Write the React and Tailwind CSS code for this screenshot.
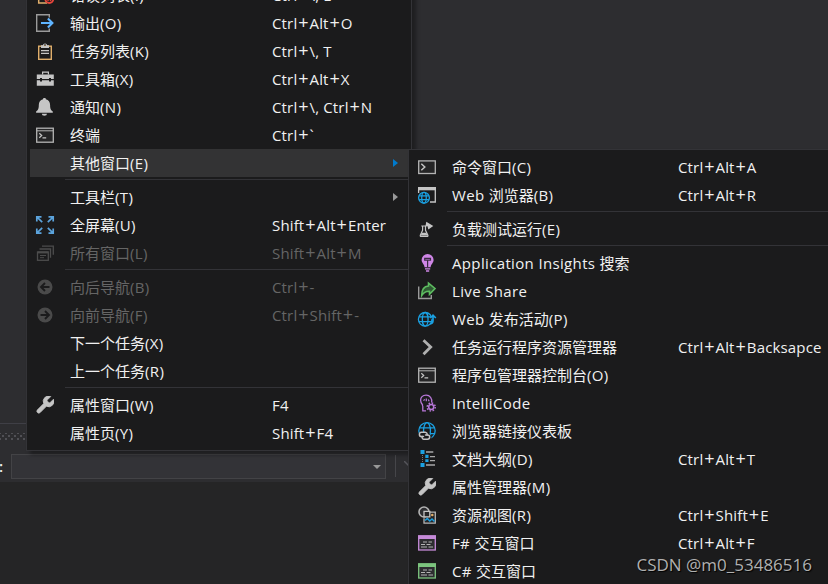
import clsx from "clsx";

const GRAY = "#c5c5c5";
const BLUE = "#1ba1e2";

function Svg({ children, className }) {
  return (
    <svg
      width="18"
      height="18"
      viewBox="0 0 18 18"
      fill="none"
      className={clsx("shrink-0 overflow-visible", className)}
    >
      {children}
    </svg>
  );
}

function ErrorListIcon() {
  return (
    <Svg>
      <path d="M11 17H2.7V1H15v7" stroke="#e0ae6b" strokeWidth="1.5" />
      <circle cx="13.3" cy="13" r="4" stroke="#e8463c" strokeWidth="1.8" />
      <path d="M11.5 11.2l3.6 3.6M15.1 11.2l-3.6 3.6" stroke="#e8463c" strokeWidth="1.3" />
    </Svg>
  );
}

function OutputIcon() {
  return (
    <Svg>
      <path d="M13.3 3.5V.7H.7v16.6h12.6v-2.8" stroke="#9a9a9a" strokeWidth="1.4" />
      <path d="M5 9h11.5M11.9 4.5L16.4 9l-4.5 4.5" stroke="#5fb4ff" strokeWidth="2.1" />
    </Svg>
  );
}

function TaskListIcon() {
  return (
    <Svg>
      <rect x="2.7" y="4.2" width="12.6" height="13.1" stroke="#e0ae6b" strokeWidth="1.4" />
      <path
        fillRule="evenodd"
        d="M5 6V3.3h1.8a2.3 2.3 0 0 1 4.5 0H13V6zM9 2.2a1 1 0 1 0 0 2 1 1 0 0 0 0-2z"
        fill={GRAY}
      />
      <path d="M5 8.6h8M5 11.4h8" stroke={GRAY} strokeWidth="1.2" />
    </Svg>
  );
}

function ToolboxIcon() {
  return (
    <Svg>
      <path d="M6.6 4.5V2.2h5.8v2.3" stroke={GRAY} strokeWidth="1.2" />
      <path d="M.8 4.5h17V9H15V8h-2v1H6V8H4v1H.8z" fill={GRAY} />
      <path d="M.8 10.2H4v1.2h2v-1.2h7v1.2h2v-1.2h2.8v5.5H.8z" fill={GRAY} />
    </Svg>
  );
}

function BellIcon() {
  return (
    <Svg>
      <path
        d="M8.4 0c1 0 1.5.5 1.5 1.2 2.7.7 4.2 3 4.2 5.8 0 4 .9 5.4 2.7 6.4v1.3H.1v-1.3C1.9 12.4 2.8 11 2.8 7c0-2.8 1.5-5.1 4.2-5.8C7 .5 7.4 0 8.4 0z"
        fill={GRAY}
      />
      <path d="M5.8 15.7H11a2.6 2.1 0 0 1-5.2 0z" fill={GRAY} />
    </Svg>
  );
}

function TerminalIcon() {
  return (
    <Svg>
      <rect x=".7" y="2.2" width="16.6" height="14" fill="#252526" stroke="#b4b4b4" strokeWidth="1.3" />
      <path d="M1 4.8h16" stroke="#b4b4b4" />
      <path d="M3.3 7.3l2.4 2.2-2.4 2.2M6.5 11.9h3.7" stroke={GRAY} strokeWidth="1.2" />
    </Svg>
  );
}

function FullScreenIcon() {
  const corner = "M.8 5.5V.8h4.7M.8.8l5.4 5.4";
  return (
    <Svg>
      <g stroke="#5ba3dc" strokeWidth="1.7">
        <path d={corner} />
        <path d={corner} transform="rotate(90 9 9)" />
        <path d={corner} transform="rotate(180 9 9)" />
        <path d={corner} transform="rotate(270 9 9)" />
      </g>
    </Svg>
  );
}

function AllWindowsIcon() {
  return (
    <Svg>
      <g stroke="#4c4c4c" strokeWidth="1.3">
        <path d="M6 2.2h11.3v8.6" />
        <path d="M3.5 5h11v8.8" />
        <rect x="1.5" y="8" width="10.8" height="8.3" />
        <path d="M1.5 8.4h10.8" strokeWidth="2" />
        <path d="M4 11.5h6M4 13.7h4" strokeWidth="1" />
      </g>
    </Svg>
  );
}

function NavIcon({ forward }) {
  return (
    <Svg className={forward && "-scale-x-100"}>
      <circle cx="9" cy="9" r="7.5" fill="#4a4a4a" />
      <path d="M13.5 9H5.3M9 5L5 9l4 4" stroke="#1b1b1c" strokeWidth="1.9" />
    </Svg>
  );
}

function WrenchIcon() {
  return (
    <svg width="18" height="18" viewBox="2 2 20 20" className="shrink-0">
      <path
        d="M14.7 6.3a1 1 0 0 0 0 1.4l1.6 1.6a1 1 0 0 0 1.4 0l3.77-3.77a6 6 0 0 1-7.94 7.94l-6.91 6.91a2.12 2.12 0 0 1-3-3l6.91-6.91a6 6 0 0 1 7.94-7.94l-3.76 3.76z"
        fill={GRAY}
        stroke={GRAY}
        strokeWidth=".8"
      />
    </svg>
  );
}

function CommandIcon() {
  return (
    <Svg>
      <rect x=".7" y="2.9" width="16.6" height="12.6" fill="#252526" stroke="#b4b4b4" strokeWidth="1.3" />
      <path d="M3.3 5.8L6.8 9l-3.5 3.2" stroke={GRAY} strokeWidth="1.5" />
    </Svg>
  );
}

function Globe({ cx, cy, r }) {
  return (
    <g transform={`translate(${cx} ${cy})`} stroke={BLUE} strokeWidth="1.3">
      <circle r={r} fill="#1b1b1c" />
      <ellipse rx={r * 0.42} ry={r} />
      <path d={`M${-r * 0.9} ${-r * 0.35}H${r * 0.9}M${-r * 0.9} ${r * 0.35}H${r * 0.9}`} />
    </g>
  );
}

function WebBrowserIcon() {
  return (
    <Svg>
      <path d="M0 1h18v3.3H0z" fill={GRAY} />
      <path d="M.6 4v3M17.3 4v12H12" stroke={GRAY} strokeWidth="1.3" />
      <Globe cx={6} cy={11.8} r={5.4} />
    </Svg>
  );
}

function LoadTestIcon() {
  return (
    <Svg>
      <path d="M8.3 1.7L15.3 6l-5 3.5-.8-3.3-2-.2z" fill={GRAY} />
      <path
        d="M3.3 6h5.4M4.6 6v4.3l-2.3 5q-.3 1.1.8 1.1h6q1.1 0 .8-1.1l-2.4-5V6"
        stroke={GRAY}
        strokeWidth="1.2"
      />
      <path d="M3.7 12.7h4.8l1 2.9H2.7z" fill={GRAY} />
    </Svg>
  );
}

function LightbulbIcon() {
  return (
    <Svg>
      <path
        d="M9.6 0a6 6 0 0 1 6 6c0 3-2.9 4.3-2.9 7.2H6.5C6.5 10.3 3.6 9 3.6 6a6 6 0 0 1 6-6z"
        fill="#cf86e6"
      />
      <path d="M6.7 4.4h5.8v1.8H6.7zM9.6 6v7.2" stroke="#3a2a42" strokeWidth="1.2" />
      <path d="M7 14.9h5.2M8 17h3.2" stroke="#cf86e6" strokeWidth="1.3" />
    </Svg>
  );
}

function LiveShareIcon() {
  return (
    <Svg>
      <path d="M.7 4.5v12h12.6V13" stroke="#9a9a9a" strokeWidth="1.4" />
      <path
        d="M10.5 1.2L17 6.5l-5.5 5.7V9.3C8 9 5.7 10.3 3.7 13.5 3.7 8 6 4.3 10.5 4z"
        fill="#2f5a33"
        stroke="#5dbb60"
        strokeWidth="1.6"
      />
    </Svg>
  );
}

function WebPublishIcon() {
  return (
    <Svg>
      <Globe cx={7.2} cy={9.3} r={6.8} />
      <path d="M15 9V5" stroke="#1b1b1c" strokeWidth="3.5" />
      <path d="M12 14q3-.5 3-3.500V5.300M12.200 8L15 5.200 17.800 8" stroke={BLUE} strokeWidth="1.7" />
    </Svg>
  );
}

function ChevronIcon() {
  return (
    <Svg>
      <path d="M5.5 2.2L12.7 9l-7.2 7.2" stroke="#b0b0b0" strokeWidth="2.8" />
    </Svg>
  );
}

function IntelliCodeIcon() {
  return (
    <Svg>
      <g stroke="#b877d8" strokeWidth="1.3">
        <path d="M13.7 8.5c.6-4-1.7-7.4-5.6-7.4-3.6 0-5.5 2.4-5.5 5.2 0 1.7.4 2.7 1.9 4.4V12M4.8 12v4.8H8" />
        <path d="M5.5 6.7l1.3-1.4M8.3 7.2V4.5M10.2 5.5l1 1.7" strokeWidth="1.2" />
        <circle cx="13.2" cy="13" r="2.5" strokeWidth="1.5" />
        <circle cx="13.2" cy="13" r="4" strokeWidth="1.5" strokeDasharray="1.57 1.57" />
      </g>
    </Svg>
  );
}

function BrowserLinkIcon() {
  return (
    <Svg>
      <Globe cx={9} cy={8.8} r={8.2} />
      <g strokeLinecap="round">
        <path d="M2.5 12.7h7M4 15.5h7" stroke="#1b1b1c" strokeWidth="5" />
        <g stroke={GRAY} strokeWidth="1.5">
          <path d="M5.5 14.6H3.6a2.2 2.2 0 0 1 0-4.4h3.6a2.2 2.2 0 0 1 1.9 2.8" />
          <path d="M7.5 12.9h2a2.2 2.2 0 0 1 0 4.4H6a2.2 2.2 0 0 1-1.9-2.8" />
        </g>
      </g>
    </Svg>
  );
}

function OutlineIcon() {
  return (
    <Svg>
      <path d="M2.5 0h4v4h-4zM7.3 4.8h3.2V8H7.3zM7.3 9.2h3.2V12H7.3zM2.5 13h4v4h-4z" fill={BLUE} />
      <path d="M8 2h7.3M12 6.6h5M12 10.7h5M8 15h9" stroke="#a8a8a8" strokeWidth="1.3" />
      <path d="M4.5 5v7" stroke="#7a7a7a" strokeDasharray="1 1" />
    </Svg>
  );
}

function ResourceViewIcon() {
  return (
    <Svg>
      <path d="M12 6.2h5.3v11H6v-5" fill="#252526" stroke="#b4b4b4" strokeWidth="1.3" />
      <path d="M7 14.5l2.3-2 2.5 2.5 2.2-2 2.5 2.5" stroke={BLUE} strokeWidth="1.5" />
      <circle cx="14.3" cy="9" r="1.3" fill="#e0ae6b" />
      <circle cx="6" cy="6" r="5" fill="#2d2d30" stroke="#b4b4b4" strokeWidth="1.6" />
      <path d="M6 5.3h5.8v5.5H6z" fill="#252526" stroke={GRAY} strokeWidth="1.3" />
    </Svg>
  );
}

function InteractiveIcon({ color }) {
  return (
    <Svg>
      <rect x=".7" y="2" width="16.6" height="14" fill="#2d2d30" stroke={color} strokeWidth="1.3" />
      <path d="M0 1.3h18V5H0z" fill={color} />
      <path d="M5 8h4M10.5 8H14M3 10.5h4M8.5 10.5h4M3 13h6M10.5 13H15" stroke="#b4b4b4" strokeWidth="1.2" />
    </Svg>
  );
}

const mainMenu = [
  { icon: <ErrorListIcon />, label: "错误列表(I)", keys: "Ctrl+\\, E" },
  { icon: <OutputIcon />, label: "输出(O)", keys: "Ctrl+Alt+O" },
  { icon: <TaskListIcon />, label: "任务列表(K)", keys: "Ctrl+\\, T" },
  { icon: <ToolboxIcon />, label: "工具箱(X)", keys: "Ctrl+Alt+X" },
  { icon: <BellIcon />, label: "通知(N)", keys: "Ctrl+\\, Ctrl+N" },
  { icon: <TerminalIcon />, label: "终端", keys: "Ctrl+`" },
  { label: "其他窗口(E)", submenu: true, active: true },
  { separator: true },
  { label: "工具栏(T)", submenu: true },
  { icon: <FullScreenIcon />, label: "全屏幕(U)", keys: "Shift+Alt+Enter" },
  { icon: <AllWindowsIcon />, label: "所有窗口(L)", keys: "Shift+Alt+M", disabled: true },
  { separator: true },
  { icon: <NavIcon />, label: "向后导航(B)", keys: "Ctrl+-", disabled: true },
  { icon: <NavIcon forward />, label: "向前导航(F)", keys: "Ctrl+Shift+-", disabled: true },
  { label: "下一个任务(X)" },
  { label: "上一个任务(R)" },
  { separator: true },
  { icon: <WrenchIcon />, label: "属性窗口(W)", keys: "F4" },
  { label: "属性页(Y)", keys: "Shift+F4" },
];

const windowsMenu = [
  { icon: <CommandIcon />, label: "命令窗口(C)", keys: "Ctrl+Alt+A" },
  { icon: <WebBrowserIcon />, label: "Web 浏览器(B)", keys: "Ctrl+Alt+R" },
  { separator: true },
  { icon: <LoadTestIcon />, label: "负载测试运行(E)" },
  { separator: true },
  { icon: <LightbulbIcon />, label: "Application Insights 搜索" },
  { icon: <LiveShareIcon />, label: "Live Share" },
  { icon: <WebPublishIcon />, label: "Web 发布活动(P)" },
  { icon: <ChevronIcon />, label: "任务运行程序资源管理器", keys: "Ctrl+Alt+Backsapce" },
  { icon: <TerminalIcon />, label: "程序包管理器控制台(O)" },
  { icon: <IntelliCodeIcon />, label: "IntelliCode" },
  { icon: <BrowserLinkIcon />, label: "浏览器链接仪表板" },
  { icon: <OutlineIcon />, label: "文档大纲(D)", keys: "Ctrl+Alt+T" },
  { icon: <WrenchIcon />, label: "属性管理器(M)" },
  { icon: <ResourceViewIcon />, label: "资源视图(R)", keys: "Ctrl+Shift+E" },
  { icon: <InteractiveIcon color="#c58ad8" />, label: "F# 交互窗口", keys: "Ctrl+Alt+F" },
  { icon: <InteractiveIcon color="#7cc47e" />, label: "C# 交互窗口" },
];

// latin runs are set slightly wider than the chinese text around them
function Label({ text }) {
  return text.split(/([\x20-\x7e]+)/).map((part, i) =>
    i % 2 ? (
      <span key={i} className="tracking-[0.35px]">
        {part}
      </span>
    ) : (
      part
    )
  );
}

function Keys({ text }) {
  return text.split(/(\+)/).map((part, i) =>
    part === "+" ? (
      <span key={i} className="px-[0.9px] text-[18px] leading-none">
        +
      </span>
    ) : (
      part
    )
  );
}

function MenuItem({ item, labelWidth }) {
  if (item.separator) {
    return (
      <div className="h-1.5 pt-0.5 pl-[35px]">
        <div className="h-px bg-[#333337]" />
      </div>
    );
  }

  return (
    <div
      className={clsx(
        "flex h-7 items-center whitespace-nowrap pl-1.5",
        item.active && "bg-[#333334]",
        item.disabled ? "text-[#656565]" : "text-[#f1f1f1]"
      )}
    >
      <div className="w-[34px] shrink-0">{item.icon}</div>
      <div className={clsx("shrink-0", labelWidth)}>
        <Label text={item.label} />
      </div>
      <div className="grow tracking-[0.15px]">
        {item.keys && <Keys text={item.keys} />}
      </div>
      {item.submenu && (
        <svg width="5" height="8" viewBox="0 0 5 8" className="mr-2.5">
          <path d="M0 0l5 4-5 4z" fill={item.active ? "#007acc" : "#999999"} />
        </svg>
      )}
    </div>
  );
}

export default function App() {
  return (
    <div className="relative flex h-[584px] w-[828px] flex-col overflow-hidden bg-[#2d2d30] font-['Open_Sans','Noto_Sans_CJK_SC',sans-serif] text-[15px] leading-7">
      {/* editor area and tool window behind the menus */}
      <div className="h-[423px] shrink-0" />
      <div className="h-px shrink-0 bg-[#3f3f46]" />
      <div className="flex h-[30px] shrink-0 items-start pt-[9px]">
        <div className="h-[7px] w-full bg-[radial-gradient(#505055_0.8px,transparent_1px),radial-gradient(#505055_0.8px,transparent_1px)] bg-[size:6px_6px] bg-[position:0_0,3px_3px]" />
      </div>
      <div className="flex h-7 shrink-0 items-start text-[#f1f1f1]">
        <div className="w-[11px] leading-6">
          <span className="-ml-px font-semibold">:</span>
        </div>
        <div className="flex h-[25px] w-[375px] items-center justify-end border border-[#434346] bg-[#333337] pr-1">
          <svg width="8" height="4" viewBox="0 0 8 4">
            <path d="M0 0h8L4 4z" fill="#999999" />
          </svg>
        </div>
        <div className="ml-[9px] mt-px h-[22px] w-px bg-[#46464a]" />
        <svg width="6" height="6" viewBox="0 0 6 6" className="ml-2 mt-[7px]">
          <path d="M0 0l5 5" stroke="#55555a" strokeWidth="1.5" />
        </svg>
      </div>
      <div className="grow bg-[#252526]" />

      {/* view menu */}
      <div className="absolute -top-[22px] left-[26px] w-[386px] border border-[#333337] bg-[#1b1b1c] pt-0.5 pr-[3px] pb-[3px] pl-[3px] shadow-[4px_4px_4px_rgba(0,0,0,0.35)]">
        {mainMenu.map((item, i) => (
          <MenuItem key={i} item={item} labelWidth="w-[202px]" />
        ))}
      </div>

      {/* other windows submenu */}
      <div className="absolute top-[149px] left-[408px] w-[440px] border border-[#333337] bg-[#1b1b1c] p-[3px] shadow-[4px_4px_4px_rgba(0,0,0,0.35)]">
        {windowsMenu.map((item, i) => (
          <MenuItem key={i} item={item} labelWidth="w-[226px]" />
        ))}
      </div>

      <div className="absolute right-4 bottom-[5px] text-[17px] text-[#b0b0b0] [text-shadow:1px_1px_1px_#000]">
        CSDN @m0_53486516
      </div>
    </div>
  );
}
